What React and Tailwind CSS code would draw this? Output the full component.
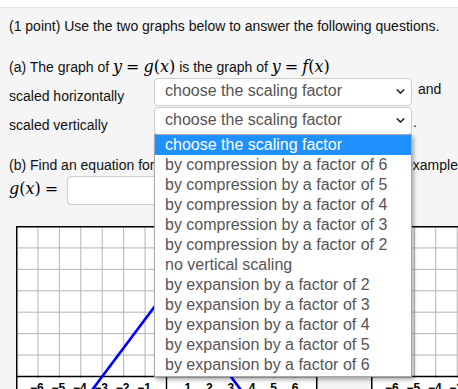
import React from "react";
import { ChevronDown } from "lucide-react";

const S = 300 / 14;
const px = (i) => 0.5 + i * S;

function Graph({ showLine }) {
  const X = (x) => 150.5 + x * S;
  const Y = (y) => 150.5 - y * S;
  const idx = Array.from({ length: 15 }, (_, i) => i);
  const xlabels = [-6, -5, -4, -3, -2, -1, 1, 2, 3, 4, 5, 6];
  const ylabels = [1, 2, 3, 4, 5, 6];
  return (
    <svg width="302" height="302" className="block shrink-0">
      <rect x="0" y="0" width="302" height="302" fill="#ffffff" />
      {idx.map((i) => (
        <line key={"v" + i} x1={px(i)} y1="0" x2={px(i)} y2="301" stroke="#b4b4b4" strokeWidth="1" />
      ))}
      {idx.map((i) => (
        <line key={"h" + i} x1="0" y1={px(i)} x2="301" y2={px(i)} stroke="#b4b4b4" strokeWidth="1" />
      ))}
      <rect x="1" y="152" width="299" height="20" fill="#ffffff" />
      <line x1="0" y1="150.5" x2="301" y2="150.5" stroke="#000" strokeWidth="1.6" />
      <line x1="150.5" y1="0" x2="150.5" y2="301" stroke="#000" strokeWidth="1.4" />
      <rect x="0.75" y="0.75" width="300" height="300" fill="none" stroke="#000" strokeWidth="1.5" />
      {xlabels.map((v) => (
        <text
          key={"xl" + v}
          x={X(v) - (v < 0 ? 1 : 0)}
          y="166"
          textAnchor="middle"
          fontFamily="'Liberation Sans', Arial, sans-serif"
          fontWeight="700"
          fontSize="12"
          fill="#000"
        >
          {v < 0 ? "\u2212" + -v : v}
        </text>
      ))}
      {ylabels.map((v) => (
        <text
          key={"yl" + v}
          x="145"
          y={Y(v) + 4}
          textAnchor="end"
          fontFamily="'Liberation Sans', Arial, sans-serif"
          fontWeight="700"
          fontSize="12"
          fill="#000"
        >
          {v}
        </text>
      ))}
      {showLine && (
        <polyline
          points={`${X(-4.2)},${Y(-1.6)} ${X(0)},${Y(4)} ${X(4.5)},${Y(-2)}`}
          fill="none"
          stroke="#0000ff"
          strokeWidth="2.6"
        />
      )}
    </svg>
  );
}

function Select() {
  return (
    <div className="w-[258px] h-[28px] shrink-0 bg-white border border-[#cccccc] rounded-[4px] flex items-center justify-between pl-[10px] pr-[4px]">
      <span className="text-[16px] leading-[20px] text-[#555555] -mt-[2px]">choose the scaling factor</span>
      <ChevronDown size={13} strokeWidth={3} color="#333333" className="-mt-[2px]" />
    </div>
  );
}

const opts = [
  "choose the scaling factor",
  "by compression by a factor of 6",
  "by compression by a factor of 5",
  "by compression by a factor of 4",
  "by compression by a factor of 3",
  "by compression by a factor of 2",
  "no vertical scaling",
  "by expansion by a factor of 2",
  "by expansion by a factor of 3",
  "by expansion by a factor of 4",
  "by expansion by a factor of 5",
  "by expansion by a factor of 6",
];

function Eq({ fn }) {
  return (
    <span className="font-['DejaVu_Serif',serif] text-[16px] text-black whitespace-nowrap">
      <i>y</i>
      <span className="mx-[4px]">=</span>
      <i>{fn}</i>(<i>x</i>)
    </span>
  );
}

export default function App() {
  return (
    <div className="relative w-[458px] h-[389px] overflow-hidden bg-white font-['Liberation_Sans',Arial,sans-serif] text-[14px] text-[#111111]">
      <div className="h-[7px] bg-white" />
      <div className="border-t border-[#e4e4e4] bg-[#f5f5f5] pl-[9px] h-[400px]">
        <div className="pt-[8px] leading-[20px] whitespace-nowrap">
          (1 point) Use the two graphs below to answer the following questions.
        </div>
        <div className="mt-[20px] h-[22px] leading-[22px] whitespace-nowrap flex items-baseline">
          <span>(a) The graph of&nbsp;</span>
          <Eq fn="g" />
          <span>&nbsp;is the graph of&nbsp;</span>
          <Eq fn="f" />
        </div>
        <div className="flex items-end h-[28px]">
          <div className="w-[145px] leading-[20px] whitespace-nowrap">scaled horizontally</div>
          <Select />
          <span className="self-start ml-[6px] mt-[1px] leading-[20px]">and</span>
        </div>
        <div className="flex items-end h-[28px] mt-[1px]">
          <div className="w-[145px] leading-[20px] whitespace-nowrap">scaled vertically</div>
          <Select />
          <span className="self-start ml-[1px] mt-[5px] leading-[20px]">.</span>
        </div>
        <div className="mt-[20px] leading-[20px] whitespace-nowrap flex">
          <span className="w-[396px] shrink-0">(b) Find an equation for</span>
          <span>example</span>
        </div>
        <div className="mt-[1px] flex items-start h-[29px]">
          <span className="font-['DejaVu_Serif',serif] text-[16px] text-black w-[58px] shrink-0 mt-[2px] leading-[22px] whitespace-nowrap">
            <i>g</i>(<i>x</i>)<span className="ml-[4px]">=</span>
          </span>
          <div className="w-[220px] h-[29px] bg-white border border-[#cccccc] rounded-[4px]" />
        </div>
        <div className="mt-[21px] ml-[7px] flex gap-[53px]">
          <Graph showLine />
          <Graph />
        </div>
      </div>

      <div className="absolute left-[154px] top-[134px] w-[258px] bg-white border border-[#a8a8a8] shadow-[2px_3px_4px_rgba(0,0,0,0.3)]">
        {opts.map((o, i) => (
          <div
            key={o}
            className={
              "h-[20px] pl-[10px] text-[16px] leading-[19px] whitespace-nowrap " +
              (i === 0 ? "bg-[#1e90ff] text-white" : "text-[#555555]")
            }
          >
            {o}
          </div>
        ))}
        <div className="h-[1px]" />
      </div>
    </div>
  );
}
